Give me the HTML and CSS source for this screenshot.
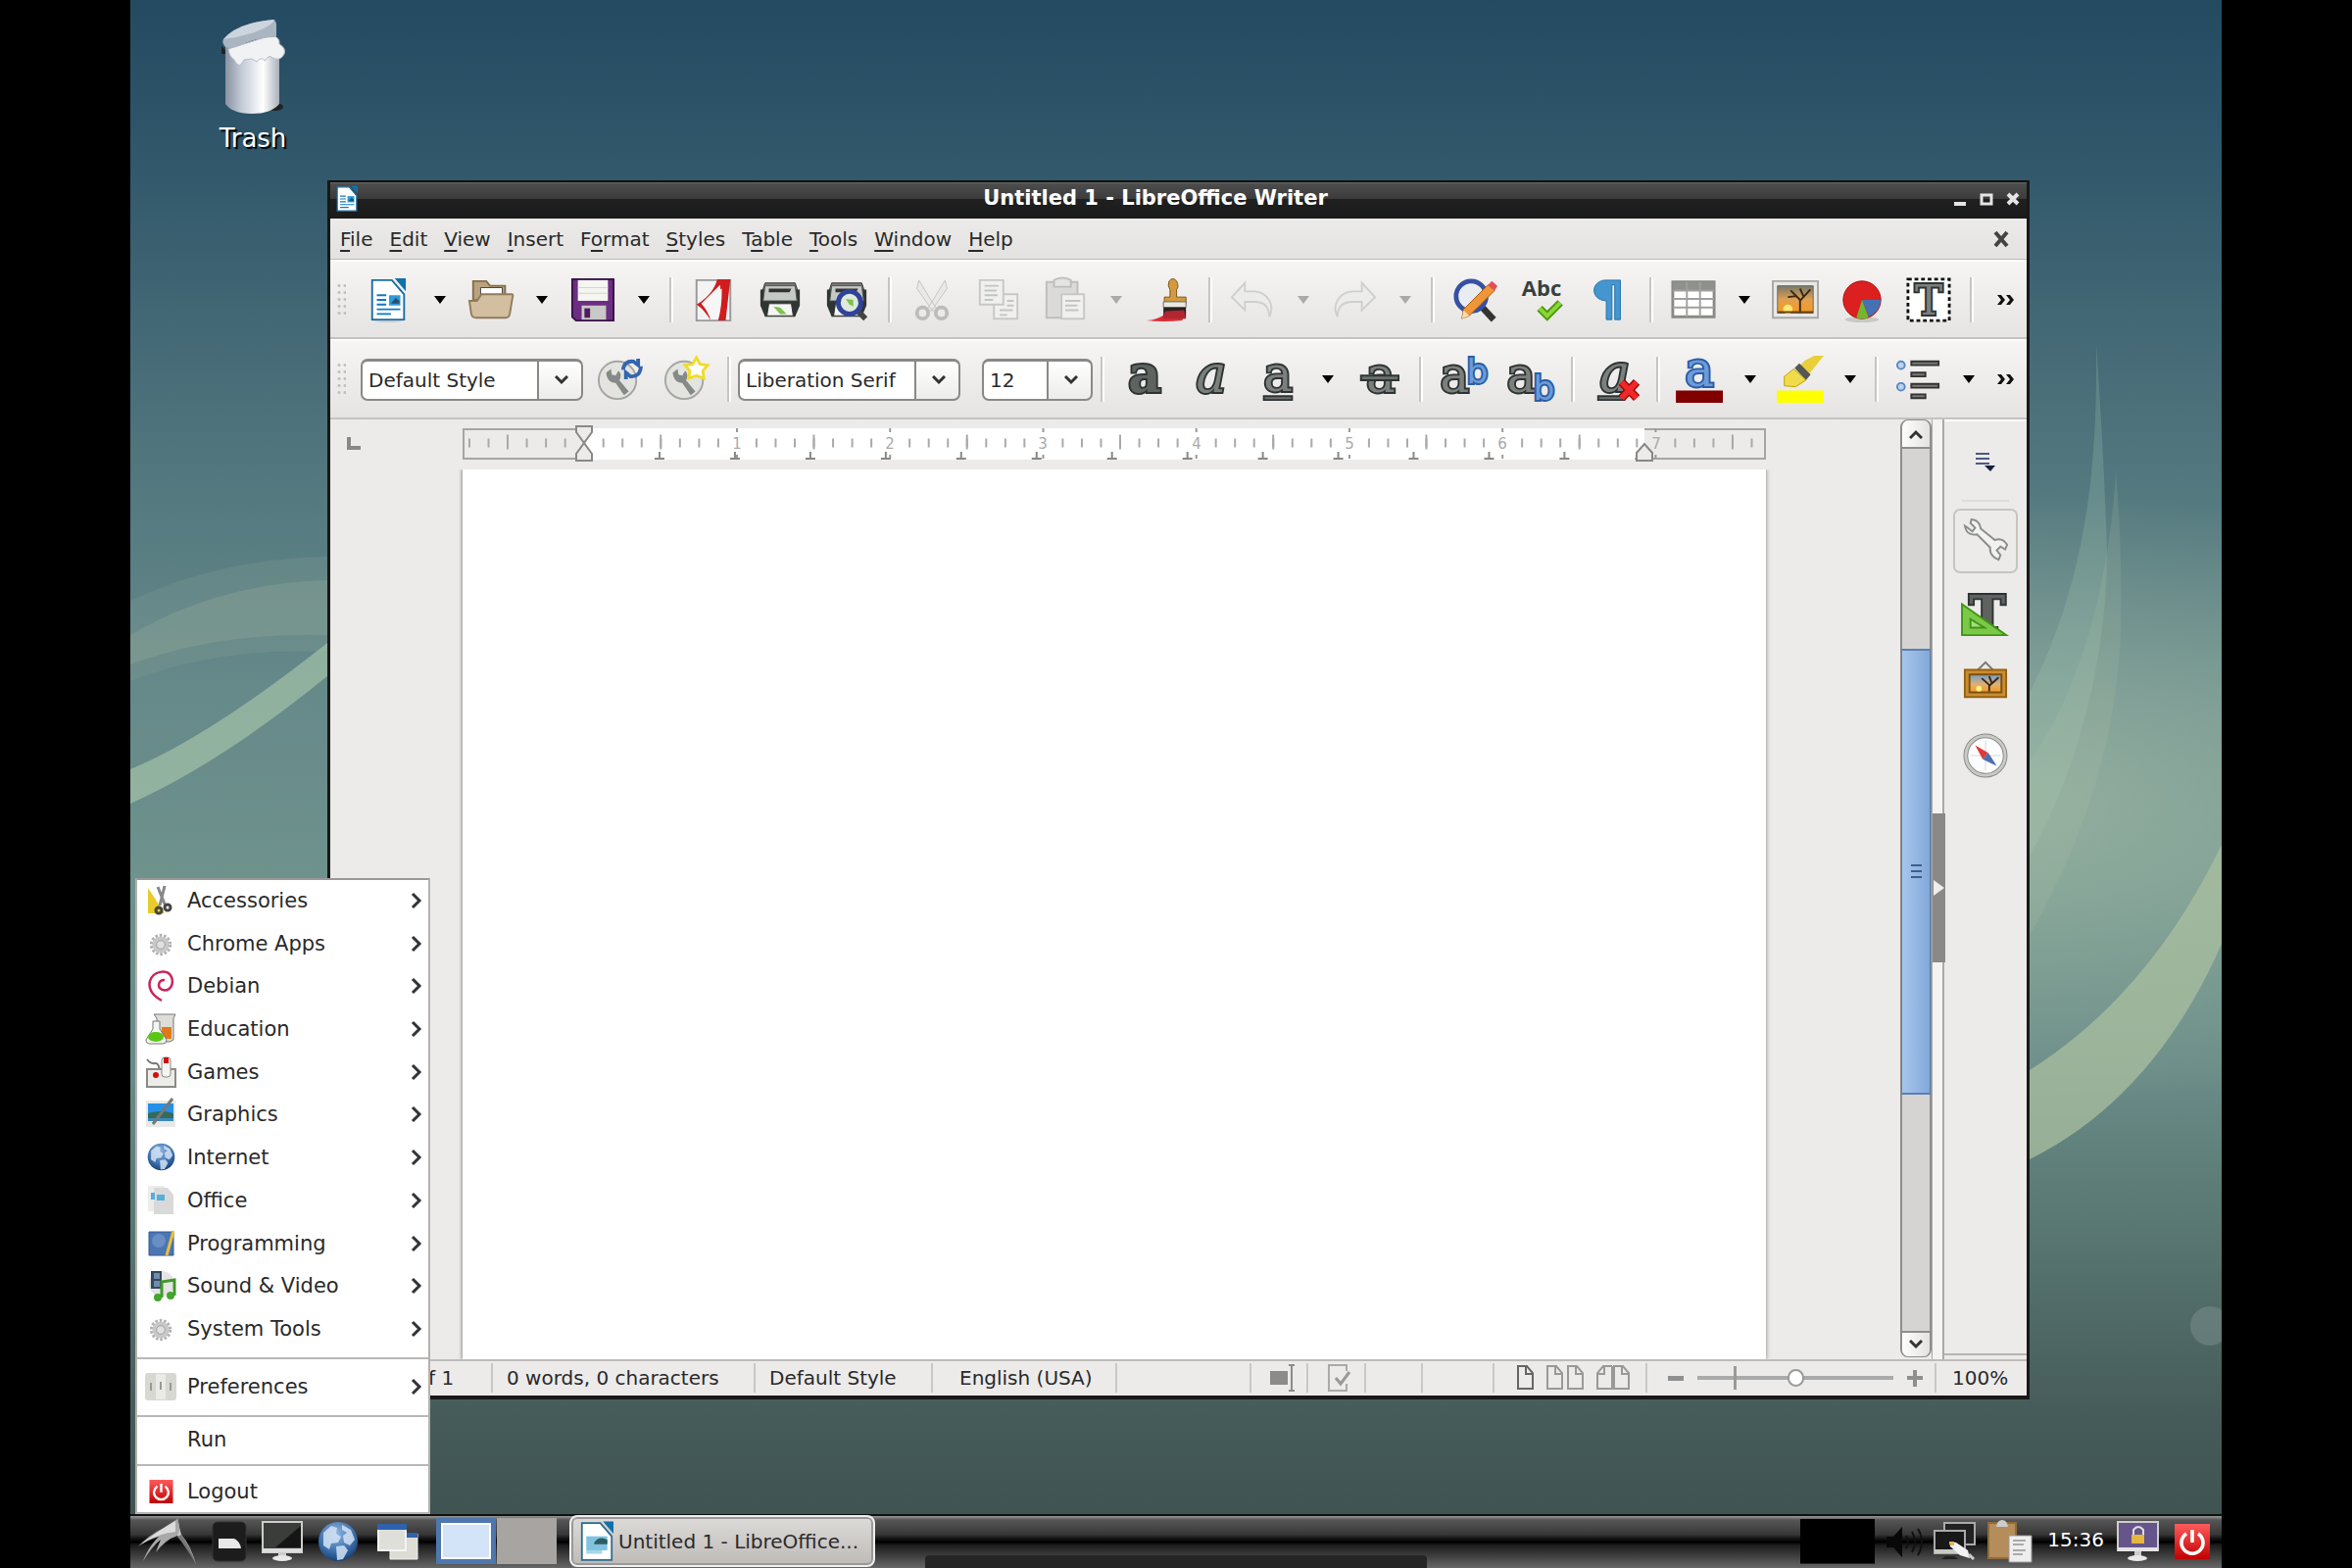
FILE: index.html
```html
<!DOCTYPE html>
<html lang="en">
<head>
<meta charset="utf-8">
<title>Desktop</title>
<link rel="stylesheet" href="styles.css">
</head>
<body>
<svg class="defs" width="0" height="0" aria-hidden="true">
  <defs>
    <linearGradient id="metal"><stop offset="0" stop-color="#8a93a3"/><stop offset=".3" stop-color="#c3cad6"/><stop offset=".7" stop-color="#fff"/><stop offset="1" stop-color="#a9afba"/></linearGradient>
    <linearGradient id="sunset" x2="0" y2="1"><stop offset="0" stop-color="#77776a"/><stop offset=".5" stop-color="#e0a050"/><stop offset="1" stop-color="#f59a20"/></linearGradient>
    <linearGradient id="dusk" x2="0" y2="1"><stop offset="0" stop-color="#6f9fd0"/><stop offset=".55" stop-color="#e0b070"/><stop offset="1" stop-color="#f59a20"/></linearGradient>
    <linearGradient id="redbtn" x2="0" y2="1"><stop offset="0" stop-color="#ff5c5c"/><stop offset="1" stop-color="#c00000"/></linearGradient>
    <radialGradient id="earth" cx=".45" cy=".3" r=".75"><stop offset="0" stop-color="#8fb8e4"/><stop offset=".6" stop-color="#3e70ac"/><stop offset="1" stop-color="#123a6c"/></radialGradient>
    <symbol id="down" viewBox="0 0 12 8"><path d="M0 0h12L6 8z"/></symbol>
    <symbol id="chev" viewBox="0 0 14 10"><path d="M1 1l6 6 6-6" fill="none" stroke="#333" stroke-width="3"/></symbol>
    <symbol id="sub" viewBox="0 0 12 18"><path d="M2 2l7 7-7 7" fill="none" stroke="#333" stroke-width="3"/></symbol>
    <symbol id="more" viewBox="0 0 18 12"><path d="M1 1h4l4 5-4 5H1l4-5zM10 1h4l4 5-4 5h-4l4-5z" fill="#111"/></symbol>
    <symbol id="writer" viewBox="0 0 38 46"><path d="M2 2h21l13 15v27H2z" fill="#fff" stroke="#1b6fa3" stroke-width="2"/><path d="M26 0h12v14z" fill="#1171a8"/><path d="M7 18h10M7 23h10M7 28h10M7 33h25M7 38h15" stroke="#0f79c0" stroke-width="2"/><path d="M20 18h12v11H20z" fill="#2f9ad8"/><path d="M22 27l5-6 4 3v3z" fill="#28506e"/></symbol>
    <symbol id="writertask" viewBox="0 0 38 46"><path d="M2 2h21l13 15v27H2z" fill="#fff" stroke="#2a6c90" stroke-width="2"/><path d="M26 0h12v14z" fill="#1171a8"/><path d="M7 17h24v16H7z" fill="#7fc3e0"/><path d="M16 24q6-8 15-3v5H16z" fill="#2c5c62"/><path d="M7 33h18v4H7z" fill="#a9d6e8"/></symbol>
    <symbol id="gear" viewBox="0 0 28 28"><circle cx="14" cy="14" r="11" fill="none" stroke="#b2b2b2" stroke-width="4" stroke-dasharray="3 2"/><circle cx="14" cy="14" r="10" fill="#c8c8c8"/><circle cx="14" cy="14" r="5" fill="#e0e0e0" stroke="#999"/></symbol>
    <symbol id="globe" viewBox="0 0 42 42"><circle cx="21" cy="21" r="20" fill="url(#earth)"/><path d="M6 12l8-7 6 2-1 6 5 3-3 6-7 1-2 6-6-4zM25 4l9 5 4 10-5 6-6-3-1-7 4-3-5-3zM19 26l8-1 4 5-5 9-6 1z" fill="#d2e2f4" opacity=".85"/></symbol>
    <symbol id="power" viewBox="0 0 36 36"><path d="M0 0h36v36H0z" fill="url(#redbtn)"/><path d="M12 10a11 11 0 1 0 12 0M18 6v13" fill="none" stroke="#fff" stroke-width="3.600"/></symbol>
    <symbol id="printer" viewBox="0 0 48 48"><path d="M8 6h32l3 9H5z" fill="#777b78" stroke="#333"/><path d="M3 13h42v17l-5 12H8L3 30z" fill="#2f3532"/><path d="M8 9h32l2 16H6z" fill="#c5c8c4" stroke="#555"/><path d="M12 12h24l-2 4H12z" fill="#333"/><path d="M12 28h24l2 13H10z" fill="#f4f6f2" stroke="#333"/><path d="M17 31l7 1 7 7h-7z" fill="#7cc24c"/></symbol>
    <symbol id="wrenchdisc" viewBox="0 0 48 48"><circle cx="22" cy="25" r="20" fill="#e3e3e0" stroke="#a5a6a3" stroke-width="2"/><path d="M10 17l5-4 1 6 4 1 3-5c3 2 3 7 1 10l10 12-5 4-9-13c-6 0-10-5-10-11z" fill="#868a86"/></symbol>
  </defs>
</svg>

<div class="desktop">
  <svg class="wallpaper" viewBox="0 0 2134 1600" preserveAspectRatio="none" aria-hidden="true">
    <path d="M0 613Q90 570 201 568V665Q90 660 0 695z" fill="#a0b4a4" opacity=".15"/>
    <path d="M0 648Q90 595 201 592V648Q90 645 0 678z" fill="#a8b8a0" opacity=".24"/>
    <path d="M0 785Q80 752 201 656V690Q90 780 0 820z" fill="#a3c4a8" opacity=".68"/>
    <path d="M2006 350Q2014 470 2017 560C2017 680 1985 800 1920 905V740C1990 620 2008 500 2006 350z" fill="#a2c8b4" opacity=".24"/>
    <path d="M2026 480Q2033 560 2031 650C2025 770 1985 880 1920 985V800C1990 720 2020 590 2026 480z" fill="#b5c8a8" opacity=".16"/>
    <path d="M1938 1092Q2060 1015 2134 862V963Q2065 1120 1938 1183z" fill="#a9bf9f" opacity=".75"/>
    <circle cx="2122" cy="1353" r="20" fill="#7b8f8d" opacity=".5"/>
  </svg>

  <a class="shortcut" href="#trash">
    <svg width="68" height="98" viewBox="0 0 68 98" aria-hidden="true"><ellipse cx="57" cy="89" rx="8" ry="4" fill="#222"/><path d="M2 27v8h8z" fill="#222"/><path d="M6 24h55v62q-8 10-28 10T6 86z" fill="url(#metal)"/><path d="M9 30l44-14q9 2 8 9 7 4 5 10-4 8-12 4-3-4-8 3-3-5-8 1l-5-3-8 1-4 6q-5-2-6-6-5-3-6-11z" fill="#f0f2f4" stroke="#b8bdc4"/><path d="M4 20Q18 3 56 0l2 4v14Q38 18 22 26q-10 4-16 2-4-4-2-8z" fill="#aab5c2"/><path d="M4 20Q18 3 56 0q-2 6-18 12T4 20z" fill="#ccd5de"/></svg>
    <span>Trash</span>
  </a>

  <section class="window" aria-label="Untitled 1 - LibreOffice Writer">
    <header class="titlebar">
      <svg width="22" height="28"><use href="#writer"/></svg>
      <h1>Untitled 1 - LibreOffice Writer</h1>
      <div class="winbtns">
        <button aria-label="Minimize"><svg width="14" height="14"><path d="M1 10h12v4H1z" fill="#e4e4e4"/></svg></button>
        <button aria-label="Maximize"><svg width="14" height="14"><path d="M2 3h10v9H2z" fill="none" stroke="#e4e4e4" stroke-width="3"/></svg></button>
        <button aria-label="Close"><svg width="14" height="14"><path d="M2 2l10 10M12 2L2 12" stroke="#e4e4e4" stroke-width="4"/></svg></button>
      </div>
    </header>
    <nav class="menubar">
      <button><u>F</u>ile</button><button><u>E</u>dit</button><button><u>V</u>iew</button><button><u>I</u>nsert</button><button>F<u>o</u>rmat</button><button><u>S</u>tyles</button><button>T<u>a</u>ble</button><button><u>T</u>ools</button><button><u>W</u>indow</button><button><u>H</u>elp</button>
      <button class="closedoc" aria-label="Close document"><svg width="18" height="18"><path d="M3 2l12 14M15 2L3 16" stroke="#444" stroke-width="4"/></svg></button>
    </nav>

    <div class="toolbar">
      <i class="grip"></i>
      <button class="tool" aria-label="New"><svg viewBox="0 0 48 48"><ellipse cx="23" cy="46" rx="16" ry="2" fill="#ccc"/><use href="#writer" x="4" y="1" width="38" height="46"/></svg></button>
      <button class="arrow" aria-label="New options"><svg><use href="#down"/></svg></button>
      <button class="tool" aria-label="Open"><svg viewBox="0 0 48 48"><path d="M5 24V4h14l4 5h16v16z" fill="#b9a27d" stroke="#84704e" stroke-width="2"/><path d="M13 11h23v14H13z" fill="#fff" stroke="#444"/><path d="M1 25h8l5-7h32q2 0 1 3l-3 18q-1 4-4 4H8q-4 0-5-4z" fill="#d3bea0" stroke="#927b5b" stroke-width="2"/></svg></button>
      <button class="arrow" aria-label="Open options"><svg><use href="#down"/></svg></button>
      <button class="tool" aria-label="Save"><svg viewBox="0 0 48 48"><path d="M2 2h44v44H6l-4-4z" fill="#6c2e82" stroke="#3a1248" stroke-width="2"/><path d="M8 3h32v22H8z" fill="#f5f5f2"/><path d="M8 11h32M8 17h32" stroke="#d0d5d0"/><path d="M12 30h26v15H12z" fill="#c8c8c6"/><path d="M15 33h6v10h-6z" fill="#4e1d60"/></svg></button>
      <button class="arrow" aria-label="Save options"><svg><use href="#down"/></svg></button>
      <i class="sep"></i>
      <button class="tool" aria-label="Export as PDF"><svg viewBox="0 0 48 48"><path d="M6 3h36v43H6z" fill="#f3f3f3" stroke="#999" stroke-width="2"/><path d="M28 2h14L37 46h-8q4-14 4-34L11 28q8 9 10 18-7-12-15-17Q24 18 28 2z" fill="#d01c1c"/><path d="M31 8L12 27q8 8 9 18 8-1 8-1 5-20 2-36z" fill="#f6f6f6"/></svg></button>
      <button class="tool" aria-label="Print"><svg viewBox="0 0 48 48"><use href="#printer"/></svg></button>
      <button class="tool" aria-label="Print preview"><svg viewBox="0 0 48 48"><use href="#printer"/><path d="M35 35l9 9" stroke="#444" stroke-width="6"/><circle cx="27" cy="27" r="12" fill="#dfe9dc" stroke="#2f439b" stroke-width="5"/><path d="M23 23l8 1v7l-4-2z" fill="#7cc24c"/></svg></button>
      <i class="sep"></i>
      <button class="tool off" aria-label="Cut" disabled><svg viewBox="0 0 48 48"><path d="M10 3l19 31-4 2L8 12zM38 3L19 34l4 2 17-24z" fill="#e8e8e6" stroke="#c4c4c2"/><g fill="none" stroke="#bcbcba" stroke-width="4"><circle cx="14" cy="38" r="6"/><circle cx="34" cy="38" r="6"/></g></svg></button>
      <button class="tool off" aria-label="Copy" disabled><svg viewBox="0 0 48 48"><g fill="#f0f0ee" stroke="#c8c8c6" stroke-width="2"><path d="M19 18h25v26H19z"/><path d="M4 3h25v26H4z"/></g><path d="M9 9h15M9 14h13M9 19h14M9 24h9M33 25h7M33 30h7M25 35h14M25 40h8" stroke="#c4c4c2" stroke-width="2"/></svg></button>
      <button class="tool off" aria-label="Paste" disabled><svg viewBox="0 0 48 48"><path d="M4 5h33v38H4z" fill="#dadad8" stroke="#bebebc" stroke-width="2"/><path d="M12 3q9-5 18 0v7H12z" fill="#e4e4e2" stroke="#bebebc" stroke-width="2"/><path d="M20 18h24v26H20z" fill="#f0f0ee" stroke="#c8c8c6" stroke-width="2"/><path d="M24 25h16M24 30h13M24 35h14" stroke="#c4c4c2" stroke-width="2"/></svg></button>
      <button class="arrow off" aria-label="Paste options" disabled><svg><use href="#down"/></svg></button>
      <button class="tool" aria-label="Clone formatting"><svg viewBox="0 0 48 48"><path d="M22 39l22-2-4 9q-20 2-38 0 12-1 20-7z" fill="#dc2c35"/><path d="M26 4q4-5 8 0 3 6 0 9v8h10v7H21v-7h6v-8q-3-4-1-9z" fill="#d39a3f" stroke="#7c5518"/><path d="M20 26h24v6H20z" fill="#e8e9e0" stroke="#666"/><path d="M20 32h24v11H20z" fill="#2a2020"/><path d="M22 36l20-1 2 9H19z" fill="#b02632"/></svg></button>
      <i class="sep"></i>
      <button class="tool off" aria-label="Undo" disabled><svg viewBox="0 0 48 48"><path d="M2 21L16 6v9h10c15 1 22 15 16 27 0-11-6-16-16-16H16v9z" fill="#ececea" stroke="#cfcfcd" stroke-width="2"/></svg></button>
      <button class="arrow off" aria-label="Undo options" disabled><svg><use href="#down"/></svg></button>
      <button class="tool off" aria-label="Redo" disabled><svg viewBox="0 0 48 48"><path d="M46 21L32 6v9H22C7 16 0 30 6 42c0-11 6-16 16-16h10v9z" fill="#ececea" stroke="#cfcfcd" stroke-width="2"/></svg></button>
      <button class="arrow off" aria-label="Redo options" disabled><svg><use href="#down"/></svg></button>
      <i class="sep"></i>
      <button class="tool" aria-label="Find and replace"><svg viewBox="0 0 48 48"><path d="M31 31l13 14" stroke="#333" stroke-width="7"/><circle cx="20" cy="20" r="16" fill="#e9edf0" stroke="#3750a4" stroke-width="5"/><path d="M10 44l2-10L38 8l7 6-27 27z" fill="#ee9638" stroke="#a85b10"/><path d="M38 8l4-4 6 5-3 5z" fill="#e84d55"/><path d="M10 44l2-9 6 6z" fill="#f5ddb0"/></svg></button>
      <button class="tool" aria-label="Spelling"><svg viewBox="0 0 48 48"><text class="abc" x="24" y="20" text-anchor="middle">Abc</text><path d="M22 33l8 8 14-14" fill="none" stroke="#4e9a06" stroke-width="8"/><path d="M22 33l8 8 14-14" fill="none" stroke="#8ad63c" stroke-width="4"/></svg></button>
      <button class="tool" aria-label="Formatting marks"><svg viewBox="0 0 48 48"><path d="M20 3h17v42h-6V8h-3v37h-6V25C5 24 5 5 20 3z" fill="#4595cf" stroke="#2474ac"/></svg></button>
      <i class="sep"></i>
      <button class="tool" aria-label="Insert table"><svg viewBox="0 0 48 48"><path d="M2 5h44v37H2z" fill="#fff" stroke="#888a85" stroke-width="3"/><path d="M2 5h44v9H2z" fill="#8f918c"/><path d="M2 14h44M2 23h44M2 32h44M17 5v37M31 5v37" stroke="#a0a19d" stroke-width="2"/></svg></button>
      <button class="arrow" aria-label="Table options"><svg><use href="#down"/></svg></button>
      <button class="tool" aria-label="Insert image"><svg viewBox="0 0 48 48"><path d="M0 4h48v39H0z" fill="#e8e8e6" stroke="#a8a8a6" stroke-width="2"/><path d="M5 9h38v29H5z" fill="url(#sunset)" stroke="#666"/><circle cx="16" cy="34" r="5" fill="#ffe873"/><path d="M29 38V24l-10-10M29 25l11-12M33 21l-4-9M25 20l-9 1" stroke="#3a2817" stroke-width="2" fill="none"/><path d="M5 36h38v2H5z" fill="#6b4518"/></svg></button>
      <button class="tool" aria-label="Insert chart"><svg viewBox="0 0 48 48"><ellipse cx="24" cy="45" rx="18" ry="3" fill="#c8c8c8"/><circle cx="24" cy="24" r="20" fill="#dc1f1f" stroke="#a80e0e"/><path d="M24 24h20q-1 13-13 18z" fill="#4672b4"/><path d="M24 24l7 19q-7 2-13 0z" fill="#73b82c"/></svg></button>
      <button class="tool" aria-label="Insert text box"><svg viewBox="0 0 48 48"><path d="M2 2h44v44H2z" fill="#fff" stroke="#111" stroke-width="3" stroke-dasharray="4 3"/><text class="slab" x="24" y="40" font-size="44" text-anchor="middle">T</text></svg></button>
      <i class="sep"></i>
      <button class="overflow" aria-label="More"><svg><use href="#more"/></svg></button>
    </div>

    <div class="toolbar format">
      <i class="grip"></i>
      <label class="combo style"><select aria-label="Paragraph style"><option>Default Style</option></select><svg><use href="#chev"/></svg></label>
      <button class="tool" aria-label="Update style"><svg viewBox="0 0 48 48"><use href="#wrenchdisc"/><path d="M28 14q1-10 11-9l5 4V2M47 10q-1 12-11 11l-5-4v7" fill="none" stroke="#3466b0" stroke-width="4"/></svg></button>
      <button class="tool" aria-label="New style"><svg viewBox="0 0 48 48"><use href="#wrenchdisc"/><path d="M35 1l4 7 8 1-5 6 1 8-8-3-8 3 1-8-5-6 8-1z" fill="#fff" stroke="#f0dc28" stroke-width="3"/></svg></button>
      <i class="sep"></i>
      <label class="combo font"><select aria-label="Font name"><option>Liberation Serif</option></select><svg><use href="#chev"/></svg></label>
      <label class="combo size"><select aria-label="Font size"><option>12</option></select><svg><use href="#chev"/></svg></label>
      <i class="sep"></i>
      <button class="tool" aria-label="Bold"><svg viewBox="0 0 48 48"><text class="slab heavy" x="24" y="38" font-size="54" text-anchor="middle">a</text></svg></button>
      <button class="tool" aria-label="Italic"><svg viewBox="0 0 48 48"><text class="slab slant" x="24" y="38" font-size="54" text-anchor="middle">a</text></svg></button>
      <button class="tool" aria-label="Underline"><svg viewBox="0 0 48 48"><text class="slab" x="24" y="37" font-size="52" text-anchor="middle">a</text><path d="M9 42h30v4H9z" fill="#6c706c" stroke="#2e3436" stroke-width="2"/></svg></button>
      <button class="arrow" aria-label="Underline options"><svg><use href="#down"/></svg></button>
      <button class="tool" aria-label="Strikethrough"><svg viewBox="0 0 48 48"><text class="slab" x="27" y="38" font-size="52" text-anchor="middle">a</text><path d="M6 20h40v5H6z" fill="#6c706c" stroke="#2e3436" stroke-width="2"/></svg></button>
      <i class="sep"></i>
      <button class="tool" aria-label="Superscript"><svg viewBox="0 0 48 48"><text class="slab" x="15" y="38" font-size="52" text-anchor="middle">a</text><text class="blue" x="39" y="28" font-size="36" text-anchor="middle">b</text></svg></button>
      <button class="tool" aria-label="Subscript"><svg viewBox="0 0 48 48"><text class="slab" x="15" y="38" font-size="52" text-anchor="middle">a</text><text class="blue" x="39" y="46" font-size="36" text-anchor="middle">b</text></svg></button>
      <i class="sep"></i>
      <button class="tool" aria-label="Clear formatting"><svg viewBox="0 0 48 48"><text class="slab slant" x="24" y="37" font-size="54" text-anchor="middle">a</text><path d="M6 42h28v4H6z" fill="#6c706c" stroke="#2e3436" stroke-width="2"/><path d="M31 27l16 17M47 27L31 44" stroke="#a40000" stroke-width="9"/><path d="M31 27l16 17M47 27L31 44" stroke="#ef2929" stroke-width="6"/></svg></button>
      <i class="sep"></i>
      <button class="tool" aria-label="Font color"><svg viewBox="0 0 48 48"><text class="blue serif" x="23" y="31" font-size="52" text-anchor="middle">a</text><path d="M-2 36h50v13H-2z" fill="#800000"/></svg></button>
      <button class="arrow" aria-label="Font color options"><svg><use href="#down"/></svg></button>
      <button class="tool" aria-label="Highlighting"><svg viewBox="0 0 48 48"><path d="M29 4l10-5h10L33 19l-10-9z" fill="#e9cf3a"/><path d="M18 12l5-5 12 12-5 6z" fill="#555753"/><path d="M17 13l13 12-11 7-12-1V21z" fill="#f0dc4a" stroke="#c4a000"/><path d="M-1 36h50v13H-1z" fill="#ff0"/></svg></button>
      <button class="arrow" aria-label="Highlighting options"><svg><use href="#down"/></svg></button>
      <i class="sep"></i>
      <button class="tool" aria-label="Bullets"><svg viewBox="0 0 48 48"><g fill="#bcd3ee" stroke="#5a86c4" stroke-width="2"><circle cx="5" cy="9" r="4"/><circle cx="5" cy="32" r="4"/></g><g fill="#777a76" stroke="#333" stroke-width="2"><path d="M16 5h29v4H16zM16 17h15v4H16zM16 29h29v4H16zM16 40h15v4H16z"/></g></svg></button>
      <button class="arrow" aria-label="Bullet options"><svg><use href="#down"/></svg></button>
      <button class="overflow" aria-label="More"><svg><use href="#more"/></svg></button>
    </div>

    <div class="workspace">
      <div class="document">
        <div class="rulerrow">
          <svg class="tabkind" width="14" height="14"><path d="M2 0v11h12" fill="none" stroke="#888" stroke-width="4"/></svg>
          <svg class="ruler" viewBox="0 0 1330 42" aria-label="Ruler">
            <path d="M1 6h1328v30H1z" fill="#ecebea" stroke="#a6a5a3" stroke-width="2"/>
            <path d="M125 5h1081v32H125z" fill="#fff"/>
            <path d="M6 20H1320" stroke="#aaa" stroke-width="9" stroke-dasharray="2 17.530"/>
            <path d="M45 19H1320" stroke="#aaa" stroke-width="15" stroke-dasharray="2 154.240"/>
            <g fill="#fff"><path d="M273 12h14v16h-14zM429 12h14v16h-14zM585 12h14v16h-14zM742 12h14v16h-14zM898 12h14v16h-14zM1054 12h14v16h-14z"/><path d="M1211 12h14v16h-14z" fill="#ecebea"/></g>
            <path d="M279 7H1230M279 34H1230" stroke="#999" stroke-width="4" stroke-dasharray="2 154.240"/>
            <path d="M200 32H1202" stroke="#888" stroke-width="6" stroke-dasharray="2 74.950"/>
            <path d="M196 36H1206" stroke="#888" stroke-width="2" stroke-dasharray="10 66.950"/>
            <g class="nums" text-anchor="middle"><text x="280" y="26">1</text><text x="436" y="26">2</text><text x="592" y="26">3</text><text x="749" y="26">4</text><text x="905" y="26">5</text><text x="1061" y="26">6</text><text x="1218" y="26">7</text></g>
            <path d="M116 3h16v6l-8 11 8 11v7h-16v-7l8-11-8-11zM1198 38v-8l8-9 8 9v8z" fill="#ecebea" stroke="#888" stroke-width="2"/>
          </svg>
        </div>
        <div class="paper" contenteditable="true" role="textbox" aria-label="Document"></div>
      </div>
      <div class="scrollbar">
        <button aria-label="Scroll up"><svg class="flip"><use href="#chev"/></svg></button>
        <div class="track"><div class="thumb"><i></i></div></div>
        <button aria-label="Scroll down"><svg><use href="#chev"/></svg></button>
      </div>
      <div class="splitter"><button aria-label="Hide sidebar"><svg width="11" height="16"><path d="M0 0l11 8-11 8z" fill="#eee"/></svg></button></div>
      <aside class="sidebar">
        <button class="deck small" aria-label="Sidebar settings"><svg width="20" height="20"><path d="M0 1h14M0 6h14M0 11h14" stroke="#4b5a80" stroke-width="2"/><path d="M9 13h11l-5 6z" fill="#14203f"/></svg></button>
        <button class="deck active" aria-label="Properties"><svg viewBox="0 0 48 48"><path d="M2 8q2 11 13 9l14 14q-1 9 9 13l2-5-4-5 4-4 5 3 2-5q-5-8-13-5L19 11Q18 2 9 1l-1 4 5 5-3 4-5-4z" fill="#f2f2f2" stroke="#8b8d89" stroke-width="2"/></svg></button>
        <button class="deck" aria-label="Styles"><svg viewBox="0 0 48 48"><text class="slab heavy" x="26" y="42" font-size="52" text-anchor="middle">T</text><path d="M-1 13l47 33H-1z" fill="#7cc84a" stroke="#3f9610" stroke-width="2"/><path d="M8 29l15 9H8z" fill="#a5dc80" stroke="#3f9610" stroke-width="2"/></svg></button>
        <button class="deck" aria-label="Gallery"><svg viewBox="0 0 48 48"><path d="M16 12l8-8 8 8" fill="none" stroke="#777" stroke-width="2"/><path d="M2 12h44v29H2z" fill="#c98d34" stroke="#97620f" stroke-width="2"/><path d="M7 17h34v19H7z" fill="url(#dusk)" stroke="#7c500e" stroke-width="2"/><circle cx="17" cy="32" r="3" fill="#fff080"/><path d="M28 35v-7l-8-7M28 29l10-9M31 27l-3-8" stroke="#3a2817" stroke-width="2" fill="none"/></svg></button>
        <button class="deck" aria-label="Navigator"><svg viewBox="0 0 48 48"><circle cx="24" cy="24" r="21" fill="#fdfdfd" stroke="#8a8c88" stroke-width="5"/><circle cx="24" cy="24" r="21" fill="none" stroke="#c8cac5" stroke-width="3"/><path d="M24 8v32M8 24h32" stroke="#d5d5d5"/><path d="M13 13l14 8-6 7z" fill="#dd3a3a"/><path d="M36 35l-15-7 6-7z" fill="#4e6fae"/></svg></button>
      </aside>
    </div>

    <footer class="status">
      <span class="pages">Page 1 of 1</span>
      <span class="words">0 words, 0 characters</span>
      <span class="pstyle">Default Style</span>
      <span class="lang">English (USA)</span>
      <span class="fill"></span>
      <span class="ins"><svg width="28" height="30"><path d="M1 8h18v14H1z" fill="#8b8b8b"/><path d="M20 2h6M20 28h6M23 2v26" stroke="#8b8b8b" stroke-width="2"/></svg></span>
      <span class="sel"><svg width="26" height="30"><path d="M20 8V2H2v26h18v-7" fill="none" stroke="#aaa" stroke-width="2"/><path d="M9 15l5 6 9-12" fill="none" stroke="#999" stroke-width="3"/></svg></span>
      <span class="blank"></span>
      <span class="gap"></span>
      <span class="views"><svg width="118" height="30" fill="none" stroke-width="2"><path d="M2 3h9l6 7v16H2zM10 3v8h7" stroke="#666"/><path d="M32 3h9l6 7v16H32zM40 3v8h7M53 3h9l6 7v16H53zM61 3v8h7" stroke="#999"/><path d="M98 3h-9l-6 7v16h32V10l-6-7h-9v23M98 3v23M83 11h7V3M115 11h-7V3" stroke="#999"/></svg></span>
      <span class="zoom"><button aria-label="Zoom out"><svg width="18" height="20"><path d="M1 8h16v5H1z" fill="#8f8f8f"/></svg></button><input type="range" min="0" max="100" value="50" aria-label="Zoom"><button aria-label="Zoom in"><svg width="18" height="20"><path d="M7 2h4v6h6v4h-6v7H7v-7H1V8h6z" fill="#8f8f8f"/></svg></button></span>
      <span class="pct">100%</span>
    </footer>
  </section>

  <nav class="startmenu">
    <div class="group apps">
      <button><svg viewBox="0 0 32 32"><path d="M3 3l17 26H3z" fill="#e8cc2c"/><path d="M13 2l8 20M20 1l-5 20" stroke="#888" stroke-width="3"/><g fill="none" stroke="#444" stroke-width="3"><circle cx="14" cy="26" r="3"/><circle cx="23" cy="23" r="3"/></g></svg><span>Accessories</span><svg class="sub"><use href="#sub"/></svg></button>
      <button><svg viewBox="0 0 32 32"><use href="#gear" x="4" y="4" width="24" height="26"/></svg><span>Chrome Apps</span><svg class="sub"><use href="#sub"/></svg></button>
      <button><svg viewBox="0 0 32 32"><path d="M17 31C8 26 3 19 5 11 8 1 23-2 27 7c3 8-2 15-9 13-6-2-5-10 2-10" fill="none" stroke="#c8255c" stroke-width="2.500"/></svg><span>Debian</span><svg class="sub"><use href="#sub"/></svg></button>
      <button><svg viewBox="0 0 32 32"><path d="M9 1h22l-2 4v22l-4 2H12V5z" fill="#deddd8" stroke="#777"/><path d="M17 14h10v12H17z" fill="#e07818"/><path d="M8 8h7v8l7 11q0 4-4 4H4q-4-1-3-4l7-11z" fill="#f3f5f0" stroke="#777"/><ellipse cx="11" cy="24" rx="8" ry="5" fill="#5cc616"/></svg><span>Education</span><svg class="sub"><use href="#sub"/></svg></button>
      <button><svg viewBox="0 0 32 32"><path d="M2 3q4 5 8 4t5 8" fill="none" stroke="#777" stroke-width="2"/><path d="M2 13h29v18H2z" fill="#ecece8" stroke="#8a8a86" stroke-width="2"/><rect x="17" y="1" width="9" height="20" rx="3" fill="#f5f5f2" stroke="#8a8a86"/><path d="M19 1h5v6h-5z" fill="#d01010"/><circle cx="11" cy="19" r="3" fill="#d01010"/></svg><span>Games</span><svg class="sub"><use href="#sub"/></svg></button>
      <button><svg viewBox="0 0 32 32"><path d="M1 2h30v27H1z" fill="#e8e8e8"/><path d="M3 5h26v18H3z" fill="#2590e8"/><path d="M3 15q13-4 26 0v8H3z" fill="#356a58"/><path d="M3 20h26v3H3z" fill="#3a8ac0"/><path d="M28 0L8 26" stroke="#777" stroke-width="3"/></svg><span>Graphics</span><svg class="sub"><use href="#sub"/></svg></button>
      <button><svg viewBox="0 0 32 32"><use href="#globe" x="2" y="1" width="29" height="29"/></svg><span>Internet</span><svg class="sub"><use href="#sub"/></svg></button>
      <button><svg viewBox="0 0 32 32"><path d="M3 1h16l3 4v22H3z" fill="#ececec"/><path d="M9 3h14l6 7v20H9z" fill="#d9d9d9"/><path d="M6 8h4v7H6zM12 10h8v6h-8z" fill="#54aede"/></svg><span>Office</span><svg class="sub"><use href="#sub"/></svg></button>
      <button><svg viewBox="0 0 32 32"><path d="M4 4h25v24H4z" fill="#4c75b2" stroke="#355c96"/><circle cx="14" cy="13" r="7" fill="#7c9fd0" opacity=".6"/><path d="M29 3l-7 25" stroke="#e8c040" stroke-width="3"/></svg><span>Programming</span><svg class="sub"><use href="#sub"/></svg></button>
      <button><svg viewBox="0 0 32 32"><circle cx="17" cy="14" r="13" fill="#e4e4e4"/><path d="M6 1h11v18H6z" fill="#35475a"/><path d="M9 3h6v6H9zM9 11h6v6H9z" fill="#6f8cac"/><path d="M17 28V12l13-2v16" fill="none" stroke="#3f9a28" stroke-width="3"/><circle cx="13" cy="28" r="4" fill="#44a52c"/><circle cx="26" cy="26" r="4" fill="#44a52c"/></svg><span>Sound &amp; Video</span><svg class="sub"><use href="#sub"/></svg></button>
      <button><svg viewBox="0 0 32 32"><use href="#gear" x="4" y="4" width="24" height="26"/></svg><span>System Tools</span><svg class="sub"><use href="#sub"/></svg></button>
    </div>
    <div class="group prefs"><button><svg viewBox="0 0 32 32"><rect y="2" width="32" height="28" rx="3" fill="#d8d8d2"/><path d="M11 3h10v26H11z" fill="#eaeae6"/><path d="M6 12v8M16 11v8M26 12v8" stroke="#999" stroke-width="2"/></svg><span>Preferences</span><svg class="sub"><use href="#sub"/></svg></button></div>
    <div class="group run"><button><i></i><span>Run</span></button></div>
    <div class="group logout"><button><svg viewBox="0 0 32 32"><use href="#power" x="4" y="4" width="25" height="24"/></svg><span>Logout</span></button></div>
  </nav>

  <footer class="panel">
    <div class="launch">
      <button aria-label="Menu"><svg width="60" height="48" viewBox="0 0 60 48"><path d="M40 0q-2 12 0 18 10 8 19 29-6-20-15-30Q42 10 40 0z" fill="#c8c8c8"/><path d="M40 1L26 10Q10 18 0 29q10-7 21-10-8 8-12 16-3 6-4 9 9-15 18-22-3 7-5 13 10-13 22-17 4-6 0-17z" fill="#a8a8a8"/><path d="M38 3Q20 13 3 27q16-11 35-13z" fill="#dcdcdc"/><path d="M44 17q8 10 15 30-12-20-19-28z" fill="#777"/></svg></button>
      <button aria-label="File manager"><svg width="36" height="42"><rect x="1" y="1" width="34" height="40" rx="5" fill="#1c1c1c" stroke="#333"/><path d="M7 18h16q6 3 7 10H7z" fill="#e8e8e8"/></svg></button>
      <button aria-label="Terminal"><svg width="42" height="42"><path d="M1 1h40v31H1z" fill="#3b3d3a" stroke="#ccc" stroke-width="2"/><path d="M40 5v22H14z" fill="#151515"/><path d="M1 28h40v4H1z" fill="#ddd"/><path d="M17 32h8v5h-8z" fill="#ccc"/><ellipse cx="21" cy="38" rx="10" ry="3" fill="#e8e8e8"/></svg></button>
      <button aria-label="Web browser"><svg width="42" height="42"><use href="#globe"/></svg></button>
      <button class="showdesk" aria-label="Show desktop"><svg width="42" height="38"><path d="M13 11h28v26H13z" fill="#ddddd6" stroke="#eee"/><path d="M13 10h28v5H13z" fill="#2e62ac"/><path d="M1 3h28v25H1z" fill="#dfdfda" stroke="#f4f4f4" stroke-width="2"/><path d="M0 1h30v6H0z" fill="#2e62ac"/></svg></button>
    </div>
    <div class="pager"><button class="on" aria-label="Desktop 1"><i></i></button><button aria-label="Desktop 2"></button></div>
    <button class="task"><svg width="34" height="42"><use href="#writertask"/></svg><span>Untitled 1 - LibreOffice...</span></button>
    <div class="tray">
      <i class="cpu"></i>
      <svg width="38" height="36"><path d="M1 13h7L17 3v31l-9-10H1z" fill="#080808"/><path d="M21 12q4 6 0 13M27 8q6 10 0 21M33 5q8 13 0 27" fill="none" stroke="#111" stroke-width="2"/></svg>
      <svg width="44" height="42"><path d="M11 2h31v22H11z" fill="#222" stroke="#aaa" stroke-width="2"/><path d="M1 10h31v23H1z" fill="#181818" stroke="#aaa" stroke-width="2"/><path d="M1 29h31v4H1z" fill="#c8cac4"/><path d="M8 39h17l-4-3h-9z" fill="#222"/><path d="M16 21l7 1 12 8 2 8-10-3-10-9z" fill="#f2f2f2"/><path d="M16 21h5v4h-4z" fill="#e8b060"/><path d="M36 34l5 5" stroke="#ccc" stroke-width="3"/></svg>
      <svg width="46" height="44"><path d="M1 3h28v36H1z" fill="#b58d5a" stroke="#8f6b3c" stroke-width="2"/><path d="M9 7q1-7 6-7t6 7z" fill="#ccc"/><path d="M22 16h23v27H22z" fill="#eee" stroke="#999"/><path d="M26 21h13M26 25h11M26 31h13M26 35h10" stroke="#aaa" stroke-width="2"/></svg>
      <time>15:36</time>
      <button aria-label="Lock screen"><svg width="44" height="42"><path d="M1 1h41v29H1z" fill="#66558a" stroke="#ccc" stroke-width="2"/><path d="M1 27h41v4H1z" fill="#e4e4e4"/><path d="M17 15V9q5-6 10 0v6" fill="none" stroke="#ddd" stroke-width="2"/><path d="M15 14h13v9H15z" fill="#e5b640"/><path d="M18 31h7v5h-7z" fill="#ccc"/><ellipse cx="21" cy="38" rx="10" ry="3" fill="#e8e8e8"/></svg></button>
      <button aria-label="Shut down"><svg width="36" height="36"><use href="#power"/></svg></button>
    </div>
  </footer>
  <div class="dock"></div>
</div>
</body>
</html>
```
FILE: styles.css
```css
* { box-sizing: border-box; }
body { margin: 0; background: #000; padding: 0 133px; font: 20px/24px "DejaVu Sans", sans-serif; color: #2a2a2a; }
button { border: 0; padding: 0; margin: 0; background: none; font: inherit; color: inherit; display: flex; align-items: center; justify-content: center; }
svg { display: block; flex: none; overflow: visible; }
.defs { position: absolute; }

.desktop { position: relative; height: 100vh; overflow: hidden; background: radial-gradient(ellipse 1100px 420px at 88% 51%, rgba(166, 190, 168, .7), transparent 75%), linear-gradient(#244a62, #30576a 10%, #476c78 23%, #567b80 33%, #66898a 44%, #6e928c 56%, #6a8c88 68%, #56736f 80%, #465c5a 90%, #3c504e); }
.wallpaper { position: absolute; inset: 0; width: 100%; height: 100%; }
.shortcut { position: absolute; left: 65px; top: 20px; width: 120px; display: flex; flex-direction: column; align-items: center; gap: 8px; color: #fff; font-size: 26px; line-height: 30px; text-decoration: none; text-shadow: 2px 2px 1px #000; }

/* Writer window */
.window { position: absolute; left: 201px; right: 196px; top: 184px; bottom: 172px; display: flex; flex-direction: column; border: solid #181818; border-width: 0 3px 4px; background: #ecebea; }
.titlebar { height: 39px; display: flex; align-items: center; padding: 0 7px 4px 6px; border-top: 2px solid #111; background: linear-gradient(#6a6a6a, #4c4c4c 2px, #3c3c3c 45%, #202020 46%, #1a1a1a); }
.titlebar h1 { flex: 1; margin: 0; text-align: center; font-size: 21px; line-height: 24px; color: #fff; padding-bottom: 2px; }
.winbtns { display: flex; gap: 13px; }
.menubar { height: 42px; display: flex; align-items: center; gap: 17px; padding: 0 17px 0 10px; background: linear-gradient(#ecebea, #e3e2e0); border-bottom: 1px solid #bbb; }
.menubar u { text-underline-offset: 4px; text-decoration-thickness: 2px; }
.menubar button { display: block; }
.menubar .closedoc { margin-left: auto; }
.toolbar { height: 81px; display: flex; align-items: center; padding: 0 13px 0 6px; background: linear-gradient(#f6f5f4, #e5e4e2); border-top: 2px solid #fcfcfc; border-bottom: 2px solid #c4c3c1; }
.format { height: 82px; }
.grip { width: 10px; height: 36px; margin-right: 10px; background: radial-gradient(circle, #c0bfbd 1px, transparent 2px) 0 0 / 6px 7px; }
.format .grip { margin-right: 15px; }
.tool { width: 68px; height: 50px; flex: none; }
.tool svg { width: 46px; height: 46px; }
.arrow { width: 36px; height: 50px; }
.format .arrow { width: 34px; }
.arrow svg { width: 12px; height: 8px; fill: #000; }
.arrow.off svg { fill: #aaa; }
.sep { width: 19px; height: 46px; background: linear-gradient(90deg, transparent 8px, #c6c5c3 8px, #c6c5c3 10px, #fff 10px, #fff 12px, transparent 12px); }
.overflow { margin-left: auto; }
.overflow svg { width: 18px; height: 12px; }
.combo { position: relative; height: 43px; display: flex; }
.combo select { appearance: none; width: 100%; border: 2px solid #8a8987; border-top-width: 3px; border-radius: 7px; padding: 0 0 0 6px; font: inherit; color: #2a2a2a; background: linear-gradient(90deg, #8a8987 2px, transparent 2px) right / 45px 100% no-repeat, linear-gradient(#fff, #ececea) right / 45px 100% no-repeat, #fff; }
.combo svg { position: absolute; right: 15px; top: 17px; width: 14px; height: 10px; pointer-events: none; }
.style { width: 227px; margin-right: 3px; }
.font { width: 227px; margin-right: 22px; }
.size { width: 113px; }
.abc { font: bold 23px "Open Sans", "DejaVu Sans", sans-serif; fill: #3a3f3e; }
.slab, .blue { font-family: "DejaVu Serif", serif; fill: #7c807c; stroke: #2e3436; stroke-width: 4px; paint-order: stroke; }
.heavy { font-weight: bold; fill: #5f635f; }
.slant { font-style: italic; }
.blue { fill: #6c9bd8; stroke: #2a5da8; font-family: "DejaVu Sans", sans-serif; }
.blue.serif { font-family: "DejaVu Serif", serif; }

.workspace { flex: 1; min-height: 0; display: grid; grid-template-columns: 1fr 32px 13px 84px; }
.document { min-width: 0; display: flex; flex-direction: column; }
.rulerrow { height: 51px; display: flex; align-items: center; padding: 0 137px 1px 17px; }
.ruler { flex: 1; margin-left: 104px; height: 42px; }
.nums { font: 15px "DejaVu Sans", sans-serif; fill: #aaa; }
.paper { flex: 1; margin: 0 137px 0 135px; background: #fff; outline: 0; box-shadow: -1px 0 3px #999, 1px 0 4px #aaa; clip-path: inset(0 -8px); }
.scrollbar { display: flex; flex-direction: column; margin-bottom: 2px; border: solid #8f8e8c; border-width: 1px 2px; border-radius: 8px; background: #d5d4d2; }
.scrollbar button { height: 29px; background: linear-gradient(90deg, #fdfdfd, #e4e3e1); border: solid #8f8e8c; border-width: 0 0 2px; border-radius: 7px 7px 0 0; }
.scrollbar button:last-child { border-width: 2px 0 0; border-radius: 0 0 7px 7px; height: 26px; }
.scrollbar svg { width: 14px; height: 10px; }
.flip { transform: rotate(180deg); }
.track { flex: 1; padding: 204px 0 0; }
.thumb { height: 455px; margin: 0 -1px; display: flex; align-items: center; justify-content: center; background: linear-gradient(90deg, #a8c6ec, #82a8da); border: solid #5b80b0; border-width: 2px 1px; }
.thumb i { width: 11px; height: 15px; background: repeating-linear-gradient(#3c5f8e 0 2px, transparent 2px 6px); }
.splitter { background: #f4f3f2; border-right: 2px solid #aaa9a7; border-left: 1px solid #aaa9a7; padding-top: 402px; }
.splitter button { width: 13px; height: 152px; background: #8a8987; }
.sidebar { display: flex; flex-direction: column; align-items: center; padding-top: 4px; margin-bottom: 4px; border-top: 2px solid #fff; border-bottom: 2px solid #b5b4b2; }
.deck { width: 66px; height: 48px; flex: none; }
.deck svg { width: 46px; height: 46px; }
.small { height: 78px; width: 48px; border-bottom: 2px solid #dddcda; }
.small svg { width: 20px; height: 20px; }
.active { height: 66px; margin: 7px 0 18px; border: 2px solid #c6c5c3; border-radius: 7px; }
.deck + .deck:nth-child(4) { margin-top: 20px; }
.deck:nth-child(5) { margin-top: 28px; }

.status { height: 37px; display: flex; border-top: 2px solid #bdbcba; background: #ecebea; }
.status > span { display: flex; align-items: center; height: 30px; margin-top: 2px; padding-left: 16px; border-right: 2px solid #c9c8c6; white-space: nowrap; }
.status .pages { width: 166px; padding-left: 14px; }
.status .words { width: 268px; padding-left: 14px; }
.status .pstyle { width: 181px; padding-left: 14px; }
.status .lang { width: 188px; padding-left: 27px; }
.status .fill { flex: 1; }
.status .ins { width: 58px; padding-left: 18px; }
.status .sel { width: 59px; padding-left: 19px; }
.status .blank { width: 58px; }
.status .gap { width: 73px; }
.status .views { width: 156px; padding-left: 22px; }
.status .zoom { width: 295px; padding-left: 20px; gap: 13px; }
.status .pct { width: 92px; border: 0; }
.zoom input { appearance: none; width: 200px; height: 32px; margin: 0; background: linear-gradient(#999, #999) 37px 50% / 3px 24px no-repeat, linear-gradient(#aaa, #aaa) 0 50% / 100% 4px no-repeat; }
.zoom input::-webkit-slider-thumb { appearance: none; width: 17px; height: 18px; border: 2px solid #999; border-radius: 9px; background: #fff; }

/* Start menu */
.startmenu { position: absolute; left: 5px; bottom: 55px; width: 301px; background: #fff; border: 2px solid #b3b2b0; border-top-color: #999; }
.group { border-top: 2px solid #b9b8b6; display: flex; align-items: center; }
.group button { width: 100%; display: grid; grid-template-columns: 32px 1fr 12px; gap: 11px; padding: 0 6px 2px 8px; text-align: left; align-items: center; font-size: 21px; }
.group svg { width: 32px; height: 32px; }
.group .sub { width: 12px; height: 18px; }
.apps { display: grid; grid-auto-rows: 1fr; height: 487px; padding-bottom: 6px; border: 0; }
.prefs { height: 59px; }
.run { height: 50px; }
.logout { height: 49px; padding-top: 6px; }

/* Bottom panel */
.panel { position: absolute; inset: auto 0 0; height: 55px; display: flex; align-items: center; border-top: 2px solid #111; background: linear-gradient(#999, #555 4px, #383838 35%, #111 44%, #000 50%, #1c1c1c 56%, #666); padding: 0 12px 2px 8px; }
.launch { display: flex; align-items: center; gap: 15px; }
.showdesk { margin-left: 4px; }
.pager { display: flex; gap: 1px; margin-left: 18px; height: 47px; }
.pager button { width: 61px; background: #a8a4a1; }
.pager .on { background: #4e77ad; }
.pager i { width: 51px; height: 37px; background: #d3e3f8; border: 2px solid #fff; }
.task { width: 312px; height: 53px; margin-left: 13px; justify-content: flex-start; gap: 5px; padding: 0 0 0 9px; border: 2px solid #eee; border-radius: 8px; background: linear-gradient(#dddbd9, #bebab7); box-shadow: inset 0 0 0 2px #999; white-space: nowrap; }
.tray { margin-left: auto; display: flex; align-items: center; gap: 11px; }
.cpu { width: 76px; height: 46px; background: #000; border-bottom: 1px solid #0a3a0a; }
.tray time { color: #fff; font-size: 20px; margin: 0 2px 0 4px; padding-bottom: 4px; }
.tray button:last-child { margin-left: 4px; }
.dock { position: absolute; bottom: 0; left: 811px; width: 512px; height: 13px; background: #252525; border-radius: 4px 4px 0 0; }
```
